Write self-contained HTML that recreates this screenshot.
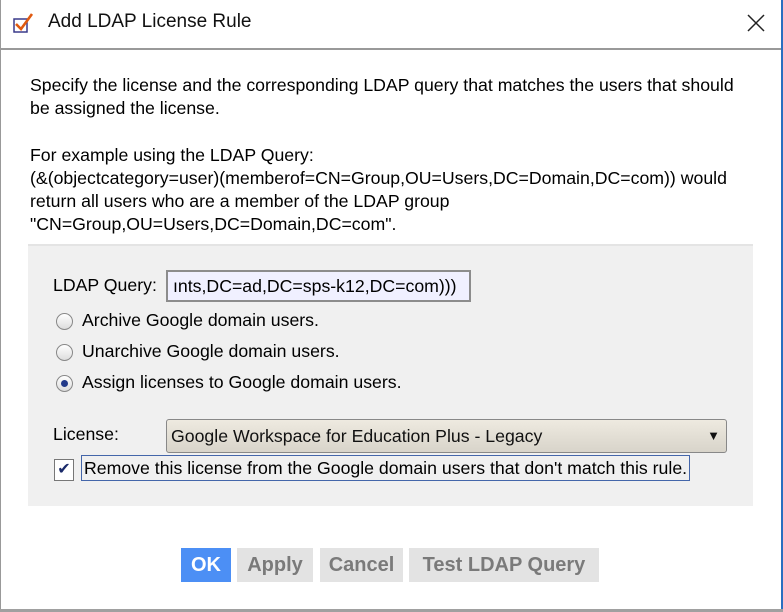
<!DOCTYPE html>
<html><head><style>
body{margin:0;width:783px;height:612px;overflow:hidden;background:#fff;font-family:"Liberation Sans","DejaVu Sans",sans-serif;color:#000;position:relative}
.a{position:absolute;white-space:nowrap}
.t{font-size:17.7px}
.radio{position:absolute;width:15px;height:15px;border:1px solid #888;border-radius:50%;background:linear-gradient(#fff,#ddd)}
.btn{position:absolute;top:548px;height:34px;background:#e3e3e3;color:#7a7a7a;font-size:20px;font-weight:bold;line-height:34px;text-align:center;font-family:"Liberation Sans Narrow","Liberation Sans",sans-serif}
</style></head><body>
<div class="a" style="left:0;top:0;width:1px;height:612px;background:#999"></div>
<div class="a" style="right:0;top:0;width:2px;height:612px;background:#2a6fc0"></div>
<div class="a" style="left:0;top:609px;width:783px;height:3px;background:#a0a0a0"></div>
<div class="a" style="left:0;top:48px;width:781px;height:2px;background:#999"></div>
<svg class="a" style="left:11px;top:10px" width="26" height="26" viewBox="0 0 26 26"><rect x="3" y="9" width="13" height="13" fill="none" stroke="#3a3a8a" stroke-width="1.5"/><path d="M5 14 L10 19 L21 4" fill="none" stroke="#e05a10" stroke-width="2.6"/></svg>
<div class="a" style="left:48px;top:11px;font-size:19px;color:#111">Add LDAP License Rule</div>
<svg class="a" style="left:746px;top:13px" width="20" height="20"><path d="M2 2L18 18M18 2L2 18" stroke="#222" stroke-width="1.5"/></svg>
<div class="a t" style="left:30px;top:74px;line-height:23px">Specify the license and the corresponding LDAP query that matches the users that should<br>be assigned the license.</div>
<div class="a t" style="left:30px;top:144px;line-height:23px">For example using the LDAP Query:<br>(&amp;(objectcategory=user)(memberof=CN=Group,OU=Users,DC=Domain,DC=com)) would<br>return all users who are a member of the LDAP group<br>"CN=Group,OU=Users,DC=Domain,DC=com".</div>
<div class="a" style="left:28px;top:244px;width:725px;height:260px;background:#f0f0f0;border-top:2px solid #e4e4e4"></div>
<div class="a t" style="left:53px;top:275px">LDAP Query:</div>
<div class="a t" style="left:166px;top:270px;width:296px;height:28px;border:2px solid #8c8c8c;background:#f0f0ff;line-height:28px;padding-left:5px;box-sizing:content-box;overflow:hidden">ınts,DC=ad,DC=sps-k12,DC=com)))</div>
<div class="radio" style="left:56px;top:313px"></div>
<div class="a t" style="left:82px;top:310px">Archive Google domain users.</div>
<div class="radio" style="left:56px;top:344px"></div>
<div class="a t" style="left:82px;top:341px">Unarchive Google domain users.</div>
<div class="radio" style="left:56px;top:375px"><div style="position:absolute;left:4px;top:4px;width:7px;height:7px;border-radius:50%;background:#223a8a"></div></div>
<div class="a t" style="left:82px;top:372px">Assign licenses to Google domain users.</div>
<div class="a t" style="left:53px;top:424px">License:</div>
<div class="a t" style="left:166px;top:419px;width:561px;height:34px;border:1px solid #888;border-radius:3px;background:linear-gradient(#eeeae0,#d8d4ca);line-height:32px;padding-left:4px;box-sizing:border-box;color:#111">Google Workspace for Education Plus - Legacy<span style="position:absolute;right:6px;top:0;font-size:13px">▼</span></div>
<div class="a" style="left:54px;top:459px;width:18px;height:20px;border:1px solid #777;background:#fff;font-size:16px;line-height:20px;text-align:center;color:#1a2a6a;font-weight:bold">✔</div>
<div class="a t" style="left:81px;top:455px;border:1px solid #4466aa;padding:1px 2px;line-height:22px">Remove this license from the Google domain users that don't match this rule.</div>
<div class="btn" style="left:181px;width:50px;background:#4c8ff5;color:#fff">OK</div>
<div class="btn" style="left:237px;width:76px">Apply</div>
<div class="btn" style="left:320px;width:83px">Cancel</div>
<div class="btn" style="left:409px;width:190px">Test LDAP Query</div>
</body></html>
